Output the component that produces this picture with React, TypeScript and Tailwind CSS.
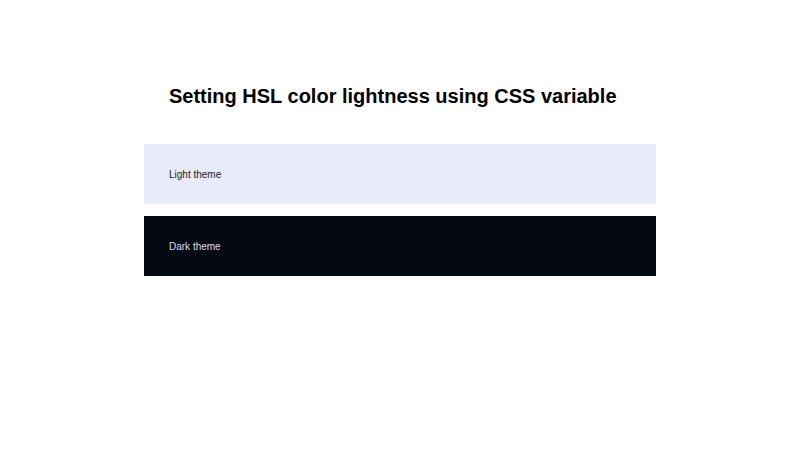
export default function App() {
  return (
    <div className="min-h-screen bg-white font-['Liberation_Sans',Arial,sans-serif]">
      <div className="mx-auto w-[512px] pt-[84px]">
        <h1 className="whitespace-nowrap px-[25px] text-[20px] leading-[24px] font-bold text-black">
          Setting HSL color lightness using CSS variable
        </h1>
        <div className="mt-[36px] flex flex-col gap-3">
          <div className="flex h-[60px] items-center bg-[#e8ebfa] px-[25px] text-[10px] text-[#1c1f2b]">
            Light theme
          </div>
          <div className="flex h-[60px] items-center bg-[#050914] px-[25px] text-[10px] text-[#dadeec]">
            Dark theme
          </div>
        </div>
      </div>
    </div>
  );
}
